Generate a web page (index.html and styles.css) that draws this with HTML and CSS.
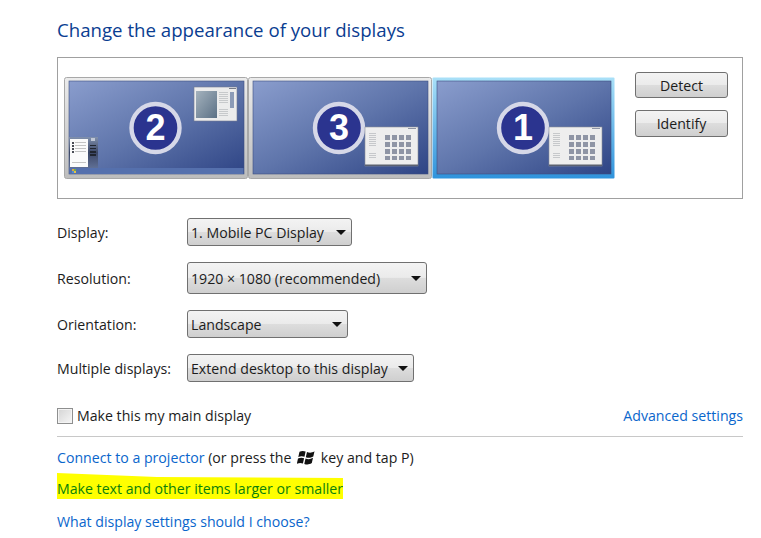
FILE: index.html
```html
<!DOCTYPE html>
<html lang="en">
<head>
<meta charset="utf-8">
<title>Screen Resolution</title>
<link rel="stylesheet" href="styles.css">
</head>
<body>
<svg class="defs" width="0" height="0" aria-hidden="true">
  <defs>
    <linearGradient id="desk" x1="0" y1="0" x2="1" y2="1">
      <stop offset="0" stop-color="#8a9dcd"/>
      <stop offset="0.5" stop-color="#5f75ab"/>
      <stop offset="1" stop-color="#2e4485"/>
    </linearGradient>
    <linearGradient id="bezel" x1="0" y1="0" x2="0" y2="1">
      <stop offset="0" stop-color="#ececec"/>
      <stop offset="1" stop-color="#bdbdbd"/>
    </linearGradient>
    <linearGradient id="sel" x1="0" y1="0" x2="0" y2="1">
      <stop offset="0" stop-color="#a9e0f8"/>
      <stop offset="1" stop-color="#2f93dc"/>
    </linearGradient>
    <linearGradient id="pic" x1="0" y1="0" x2="1" y2="1">
      <stop offset="0" stop-color="#a4b2bd"/>
      <stop offset="1" stop-color="#5c7186"/>
    </linearGradient>
    <linearGradient id="side" x1="0" y1="0" x2="0" y2="1">
      <stop offset="0" stop-color="#8090ad"/>
      <stop offset="0.5" stop-color="#3c4766"/>
      <stop offset="1" stop-color="#5f6f95"/>
    </linearGradient>
    <g id="calendar">
      <rect x="0" y="0" width="53" height="39" fill="#eeeeee" stroke="#8d8f98" stroke-width="0.6"/>
      <rect x="0" y="37.500" width="53" height="1.500" fill="#5b6170"/>
      <g fill="#c6c8cb">
        <rect x="4" y="6" width="7" height="1"/><rect x="4" y="8" width="7" height="1"/><rect x="4" y="10" width="7" height="1"/>
        <rect x="4" y="12" width="7" height="1"/><rect x="4" y="14" width="7" height="1"/><rect x="4" y="16" width="7" height="1"/>
        <rect x="4" y="18" width="7" height="1"/><rect x="4" y="26" width="7" height="1"/><rect x="4" y="28" width="7" height="1"/>
        <rect x="4" y="30" width="7" height="1"/>
      </g>
      <g fill="#8f95a5">
        <rect x="20" y="8" width="5" height="5"/><rect x="27" y="8" width="5" height="5"/><rect x="34" y="8" width="5" height="5"/><rect x="41" y="8" width="5" height="5"/>
        <rect x="20" y="15" width="5" height="5"/><rect x="27" y="15" width="5" height="5"/><rect x="34" y="15" width="5" height="5"/><rect x="41" y="15" width="5" height="5"/>
        <rect x="20" y="22" width="5" height="5"/><rect x="27" y="22" width="5" height="5"/><rect x="34" y="22" width="5" height="5"/><rect x="41" y="22" width="5" height="5"/>
        <rect x="20" y="29" width="5" height="4"/><rect x="27" y="29" width="5" height="4"/><rect x="34" y="29" width="5" height="4"/><rect x="41" y="29" width="5" height="4"/>
      </g>
      <rect x="43" y="1" width="8" height="1" fill="#8f95a5"/>
    </g>
  </defs>
</svg>
<main class="page">
  <h1 class="title">Change the appearance of your displays</h1>

  <section class="frame">
    <div class="monitors">
      <svg class="monitor" width="184" height="102" viewBox="0 0 184 102">
        <rect x="0.500" y="0.500" width="183" height="101" rx="2" fill="url(#bezel)" stroke="#a8a8a8"/>
        <rect x="5" y="4" width="175" height="93" fill="url(#desk)" stroke="#3c4f80" stroke-width="0.6"/>
        <rect x="5.500" y="91" width="174" height="6" fill="#5570ad"/>
        <rect x="8" y="92" width="2" height="2" fill="#d9a441"/><rect x="10" y="92" width="2" height="2" fill="#6fae4d"/>
        <rect x="8" y="94" width="2" height="2" fill="#4f8fd0"/><rect x="10" y="94" width="2" height="2" fill="#e6c24a"/>
        <g>
          <rect x="5" y="60" width="29" height="31" fill="url(#side)"/>
          <rect x="6" y="62" width="18" height="28" fill="#fbfbfb"/>
          <g fill="#4a4d55"><rect x="8" y="65" width="2" height="2"/><rect x="8" y="68" width="2" height="2"/><rect x="8" y="71" width="2" height="2"/><rect x="8" y="74" width="2" height="2"/></g>
          <g fill="#c4c4c4"><rect x="11" y="65" width="11" height="1"/><rect x="11" y="68" width="11" height="1"/><rect x="11" y="71" width="11" height="1"/><rect x="11" y="74" width="11" height="1"/><rect x="8" y="85" width="14" height="1"/></g>
          <g fill="#20252f"><rect x="26" y="68" width="6" height="1"/><rect x="26" y="71" width="6" height="1"/><rect x="26" y="74" width="6" height="2"/><rect x="26" y="77" width="6" height="2"/></g>
          <rect x="27" y="61" width="4" height="3" fill="#c0c7d6"/>
        </g>
        <g>
          <rect x="130" y="10" width="43" height="34" fill="#ececec" stroke="#737b8f" stroke-width="0.6"/>
          <rect x="132" y="14" width="21" height="27" fill="url(#pic)"/>
          <g fill="#c7c9cb">
            <rect x="155" y="15" width="9" height="1"/><rect x="155" y="17" width="9" height="1"/><rect x="155" y="19" width="9" height="1"/><rect x="155" y="21" width="9" height="1"/><rect x="155" y="23" width="9" height="1"/><rect x="155" y="25" width="9" height="1"/>
            <rect x="155" y="32" width="9" height="1"/><rect x="155" y="34" width="9" height="1"/><rect x="155" y="36" width="9" height="1"/><rect x="155" y="38" width="9" height="1"/>
          </g>
          <rect x="166" y="15" width="4" height="16" fill="#8c9bb7"/>
          <rect x="165" y="11" width="7" height="1" fill="#777c88"/>
        </g>
        <circle cx="91.500" cy="51" r="24" fill="#2b348f" stroke="#d6d8e8" stroke-width="4.400"/>
        <text class="digit" x="91.500" y="63" text-anchor="middle">2</text>
      </svg>
      <svg class="monitor" width="184" height="102" viewBox="0 0 184 102">
        <rect x="0.500" y="0.500" width="183" height="101" rx="2" fill="url(#bezel)" stroke="#a8a8a8"/>
        <rect x="5" y="4" width="175" height="93" fill="url(#desk)" stroke="#3c4f80" stroke-width="0.6"/>
        <circle cx="91" cy="51" r="24" fill="#2b348f" stroke="#d6d8e8" stroke-width="4.400"/>
        <text class="digit" x="91" y="63" text-anchor="middle">3</text>
        <use href="#calendar" x="117" y="50"/>
      </svg>
      <svg class="monitor" width="184" height="102" viewBox="0 0 184 102">
        <rect x="0.500" y="0.500" width="182" height="101" rx="1" fill="url(#sel)"/>
        <rect x="5" y="4" width="174" height="93" fill="url(#desk)" stroke="#3c4f80" stroke-width="0.6"/>
        <circle cx="91" cy="51" r="24" fill="#2b348f" stroke="#d6d8e8" stroke-width="4.400"/>
        <text class="digit" x="91" y="63" text-anchor="middle">1</text>
        <use href="#calendar" x="117" y="50"/>
      </svg>
    </div>
    <div class="actions">
      <button class="btn" type="button">Detect</button>
      <button class="btn btn-tall" type="button">Identify</button>
    </div>
  </section>

  <div class="fields">
    <div class="field">
      <span class="label">Display:</span>
      <div class="select s-display"><span>1. Mobile PC Display</span><i class="arrow"></i></div>
    </div>
    <div class="field">
      <span class="label">Resolution:</span>
      <div class="select s-res"><span>1920 × 1080 (recommended)</span><i class="arrow"></i></div>
    </div>
    <div class="field">
      <span class="label">Orientation:</span>
      <div class="select s-orient"><span>Landscape</span><i class="arrow"></i></div>
    </div>
    <div class="field">
      <span class="label">Multiple displays:</span>
      <div class="select s-multi"><span>Extend desktop to this display</span><i class="arrow"></i></div>
    </div>
  </div>

  <div class="main-row">
    <label class="check"><i class="box"></i><span>Make this my main display</span></label>
    <a class="link" href="#">Advanced settings</a>
  </div>

  <div class="links">
    <p class="line"><a class="link" href="#">Connect to a projector</a> (or press the
      <svg class="winkey" width="18" height="16" viewBox="0 0 18 16"><path d="M2.500 1.800c2-.9 3.900-1 6.100-.2L7.500 6.800C5.400 6 3.400 6.100 1.300 7z M10 2c2.300.9 4.700 1 7.500-.8l-1.200 5.300c-2.800 1.700-5.200 1.600-7.500.7z M7.100 8.200L5.900 13.600C3.900 12.800 2 12.900-.2 13.900L1 8.500c2.200-1 4.100-1.100 6.100-.3z M8.500 8.500c2.400.9 4.700 1 7.500-.7l-1.200 5.300c-2.800 1.800-5.200 1.700-7.500.8z" fill="#111"/></svg>
      key and tap P)</p>
    <p class="line hl"><span class="marker">Make text and other items larger or smaller</span></p>
    <p class="line"><a class="link" href="#">What display settings should I choose?</a></p>
  </div>
</main>
</body>
</html>
```
FILE: styles.css
```css
* { box-sizing: border-box; }
html, body { margin: 0; padding: 0; }
body {
  background: #fff;
  color: #1c1c1c;
  font-family: "Open Sans", "Noto Sans", sans-serif;
  font-size: 14.15px;
  height: 538px;
  overflow: hidden;
}
.defs { display: block; height: 0; }
.page { width: 686px; margin-left: 57px; padding-top: 17px; }
.title {
  margin: 0;
  height: 40px;
  font-size: 18.65px;
  line-height: 26px;
  font-weight: 400;
  color: #0a3d91;
}
.frame {
  height: 142px;
  border: 1px solid #a0a0a0;
  display: flex;
  padding: 14px 14px 0 6px;
  justify-content: space-between;
}
.monitors { display: flex; padding-top: 5px; align-items: flex-start; }
.monitor { display: block; }
.digit { font-family: "Liberation Sans", Arial, sans-serif; font-weight: 700; font-size: 36px; fill: #fff; }
.actions { display: flex; flex-direction: column; gap: 12px; width: 93px; }
.btn {
  height: 26px;
  padding: 0;
  border: 1px solid #707070;
  border-radius: 3px;
  font: inherit;
  color: #1c1c1c;
  background: linear-gradient(#f3f3f3 0, #ebebeb 48%, #dddddd 50%, #cfcfcf 100%);
}
.btn-tall { height: 27px; }
.fields { padding-top: 19px; display: flex; flex-direction: column; }
.field { display: flex; align-items: center; margin-bottom: 16px; }
.label { width: 130px; }
.select {
  display: flex;
  align-items: center;
  justify-content: space-between;
  height: 28px;
  padding: 0 5px 0 3px;
  border: 1px solid #707070;
  border-radius: 3px;
  background: linear-gradient(#f3f3f3 0, #ebebeb 48%, #dddddd 50%, #cfcfcf 100%);
}
.s-display { width: 165px; }
.s-res { width: 240px; height: 32px; }
.s-orient { width: 161px; }
.s-multi { width: 227px; }
.arrow {
  width: 0; height: 0;
  border-left: 5px solid transparent;
  border-right: 5px solid transparent;
  border-top: 5px solid #111;
}
.main-row {
  display: flex;
  align-items: center;
  justify-content: space-between;
  margin-top: 3px;
  height: 36px;
  padding-bottom: 6px;
  border-bottom: 1px solid #c8c8c8;
}
.check { display: flex; align-items: center; gap: 4px; }
.box {
  width: 16px; height: 16px;
  border: 1px solid #8e8f8f;
  background: linear-gradient(135deg, #d4d4d4, #f6f6f6);
  box-shadow: inset 0 0 0 1px #f4f4f4;
}
.link { color: #0a66cc; text-decoration: none; }
.links { padding-top: 10px; }
.line { margin: 0; line-height: 22px; }
.winkey { vertical-align: -3px; margin: 0 2px; }
.hl { margin-top: 4px; height: 26px; line-height: 32px; }
.marker {
  display: inline-block;
  background: #ffff00;
  color: #0b800b;
  height: 26px;
  clip-path: polygon(0 0, 100px 4px, 100% 5px, 100% 100%, 0 100%);
}
.line:last-child { margin-top: 12px; }
```
